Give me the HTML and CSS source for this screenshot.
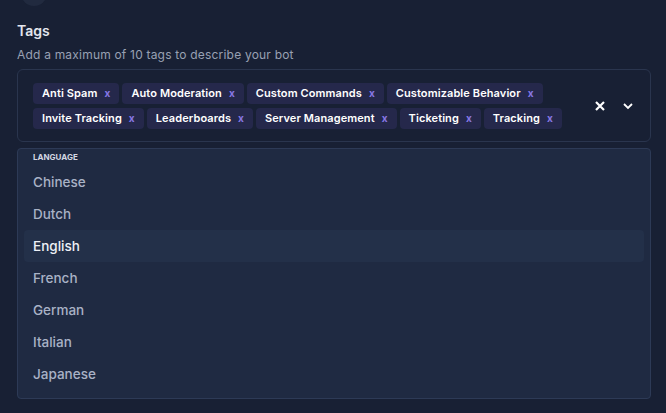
FILE: index.html
```html
<!DOCTYPE html>
<html lang="en">
<head>
<meta charset="UTF-8">
<meta name="viewport" content="width=device-width, initial-scale=1.0">
<title>Tags</title>
<link rel="stylesheet" href="styles.css">
</head>
<body>
<div class="page">
    <div class="avatar"></div>
    <div class="field">
        <h3 class="field-label">Tags</h3>
        <p class="field-help">Add a maximum of 10 tags to describe your bot</p>
        <div class="select">
            <div class="chips">
                <span class="chip">Anti Spam<span class="chip-x">x</span></span>
                <span class="chip">Auto Moderation<span class="chip-x">x</span></span>
                <span class="chip">Custom Commands<span class="chip-x">x</span></span>
                <span class="chip">Customizable Behavior<span class="chip-x">x</span></span>
                <span class="chip">Invite Tracking<span class="chip-x">x</span></span>
                <span class="chip">Leaderboards<span class="chip-x">x</span></span>
                <span class="chip">Server Management<span class="chip-x">x</span></span>
                <span class="chip">Ticketing<span class="chip-x">x</span></span>
                <span class="chip">Tracking<span class="chip-x">x</span></span>
            </div>
            <div class="select-actions">
                <svg class="icon" width="12" height="12" viewBox="0 0 12 12"><path d="M2 2L10 10M10 2L2 10" stroke="#fff" stroke-width="2.2" fill="none"/></svg>
                <svg class="icon" width="12" height="12" viewBox="0 0 12 12"><path d="M2 4L6 8L10 4" stroke="#fff" stroke-width="1.8" fill="none"/></svg>
            </div>
        </div>
        <div class="menu">
            <div class="menu-group">Language</div>
            <div class="menu-item">Chinese</div>
            <div class="menu-item">Dutch</div>
            <div class="menu-item active">English</div>
            <div class="menu-item">French</div>
            <div class="menu-item">German</div>
            <div class="menu-item">Italian</div>
            <div class="menu-item">Japanese</div>
        </div>
    </div>
</div>
</body>
</html>
```
FILE: styles.css
```css
body {
    margin: 0;
    background-color: #182034;
    font-family: Inter, "Liberation Sans", sans-serif;
    overflow: hidden;
}
.page {
    padding: 0 15px 0 17px;
}
.avatar {
    width: 26px;
    height: 26px;
    margin: -20px 0 0 4px;
    border-radius: 50%;
    background-color: #212a3f;
}
.field-label {
    margin: 15px 0 0;
    font-size: 14px;
    font-weight: 600;
    line-height: 20px;
    color: #e3e6ee;
}
.field-help {
    margin: 6px 0 0;
    font-size: 12px;
    line-height: 16px;
    letter-spacing: 0.2px;
    color: #98a0b3;
}
.select {
    display: flex;
    align-items: center;
    margin-top: 6px;
    height: 71px;
    border: 1px solid #2a354e;
    border-radius: 6px;
}
.chips {
    flex: 1;
    display: flex;
    flex-wrap: wrap;
    gap: 4px 3px;
    padding-left: 15px;
}
.chip {
    display: inline-flex;
    align-items: center;
    height: 21px;
    padding: 0 9px;
    border-radius: 4px;
    background-color: #25284b;
    color: #fff;
    font-size: 11px;
    font-weight: 600;
    letter-spacing: 0.1px;
}
.chip-x {
    margin-left: 7px;
    color: #8777e4;
    font-size: 10px;
    font-weight: 700;
}
.select-actions {
    display: flex;
    align-items: center;
    gap: 16px;
    padding-right: 16px;
}
.icon {
    display: block;
}
.menu {
    margin-top: 6px;
    height: 246px;
    background-color: #1f2a42;
    border: 1px solid #2d3a56;
    border-radius: 4px;
    padding: 3px 6px 0;
}
.menu-group {
    padding: 0 9px;
    font-size: 8px;
    font-weight: 700;
    line-height: 10px;
    text-transform: uppercase;
    color: #d3d8e2;
    margin-bottom: 4px;
}
.menu-item {
    height: 32px;
    line-height: 32px;
    padding: 0 9px;
    border-radius: 4px;
    font-size: 13.5px;
    font-weight: 500;
    color: #a9b2c6;
}
.menu-item.active {
    background-color: #233049;
    color: #eef1f6;
}
```
